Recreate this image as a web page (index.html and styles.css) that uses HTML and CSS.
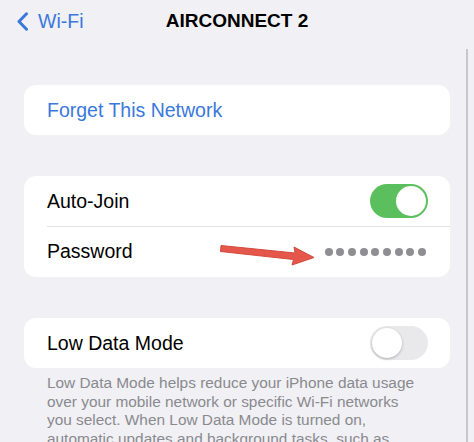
FILE: index.html
```html
<!DOCTYPE html>
<html lang="en">
<head>
    <meta charset="UTF-8">
    <title>AIRCONNECT 2</title>
    <link rel="stylesheet" href="styles.css">
</head>
<body>
    <div class="screen">
        <header class="nav">
            <a class="back" href="#">
                <svg width="13" height="19" viewBox="0 0 13 19"><path d="M10.5 1.8 L3 9.5 L10.5 17.2" fill="none" stroke="#3a78dc" stroke-width="3" stroke-linecap="round" stroke-linejoin="round"/></svg>
                <span>Wi-Fi</span>
            </a>
            <h1>AIRCONNECT 2</h1>
            <span></span>
        </header>

        <main class="content">
            <section class="group">
                <div class="row link">Forget This Network</div>
            </section>

            <section class="group">
                <div class="row">
                    <span>Auto-Join</span>
                    <span class="switch on"><i></i></span>
                </div>
                <div class="row">
                    <span>Password</span>
                    <span class="dots">
                        <i></i><i></i><i></i><i></i><i></i><i></i><i></i><i></i><i></i>
                    </span>
                    <!-- callout pointing at the hidden password -->
                    <svg class="arrow" width="100" height="30" viewBox="0 0 100 30">
                        <path d="M2 5.5 L76 13 L75 7 L95 17.5 L73 25 L74.5 19.5 L1.5 11.5 Z" fill="#e4574a" stroke="#d34a3e" stroke-width="1" stroke-linejoin="round"/>
                    </svg>
                </div>
            </section>

            <section class="group">
                <div class="row">
                    <span>Low Data Mode</span>
                    <span class="switch"><i></i></span>
                </div>
            </section>

            <p class="note">Low Data Mode helps reduce your iPhone data usage over your mobile network or specific Wi-Fi networks you select. When Low Data Mode is turned on, automatic updates and background tasks, such as Photos syncing, are paused.</p>
        </main>

        <div class="scroll-bar"></div>
    </div>
</body>
</html>
```

FILE: styles.css
```css
html, body {
    margin: 0;
    height: 100%;
    overflow: hidden;
}
body {
    background-color: #f0f0f5;
    color: #000;
    font-family: "Liberation Sans", Arial, sans-serif;
}
.screen {
    position: relative;
    height: 100%;
}
.nav {
    display: grid;
    grid-template-columns: 1fr auto 1fr;
    align-items: center;
    height: 42px;
    padding: 0 16px;
}
.back {
    display: flex;
    align-items: center;
    gap: 9px;
    color: #3a78dc;
    text-decoration: none;
    font-size: 19.5px;
}
.nav h1 {
    margin: 0;
    font-size: 19px;
    font-weight: 700;
}
.content {
    padding: 43px 24px 0;
}
.group {
    background-color: #fff;
    border-radius: 12px;
    margin-bottom: 41px;
    overflow: hidden;
}
.group + .note {
    margin-top: -35px;
}
.row {
    position: relative;
    display: flex;
    align-items: center;
    justify-content: space-between;
    height: 50px;
    padding: 0 22px 0 23px;
    font-size: 19.5px;
}
.row + .row {
    height: 51px;
}
.row + .row::before {
    content: "";
    position: absolute;
    top: 0;
    left: 23px;
    right: 0;
    border-top: 1px solid #e2e2e6;
}
.link {
    color: #3a78dc;
}
.switch {
    display: flex;
    align-items: center;
    width: 58px;
    height: 34px;
    padding: 0 2px;
    box-sizing: border-box;
    border-radius: 17px;
    background-color: #e9e9eb;
}
.switch i {
    width: 30px;
    height: 30px;
    border-radius: 50%;
    background-color: #fff;
    box-shadow: 0 1px 3px rgba(0, 0, 0, 0.25);
}
.switch.on {
    justify-content: flex-end;
    background-color: #5bbf5d;
}
.switch.on i {
    box-shadow: none;
}
.dots {
    display: flex;
    gap: 3.7px;
    margin-right: 2px;
}
.dots i {
    width: 8px;
    height: 8px;
    border-radius: 50%;
    background-color: #8e8e93;
}
.arrow {
    position: absolute;
    left: 195px;
    top: 14px;
}
.note {
    margin: 0;
    padding: 0 23px;
    max-width: 380px;
    color: #8a8a8e;
    font-size: 15.4px;
    line-height: 18.5px;
}
.scroll-bar {
    position: absolute;
    top: 49px;
    bottom: 0;
    left: 466px;
    width: 2px;
    background-color: #c8c8cc;
}
```
